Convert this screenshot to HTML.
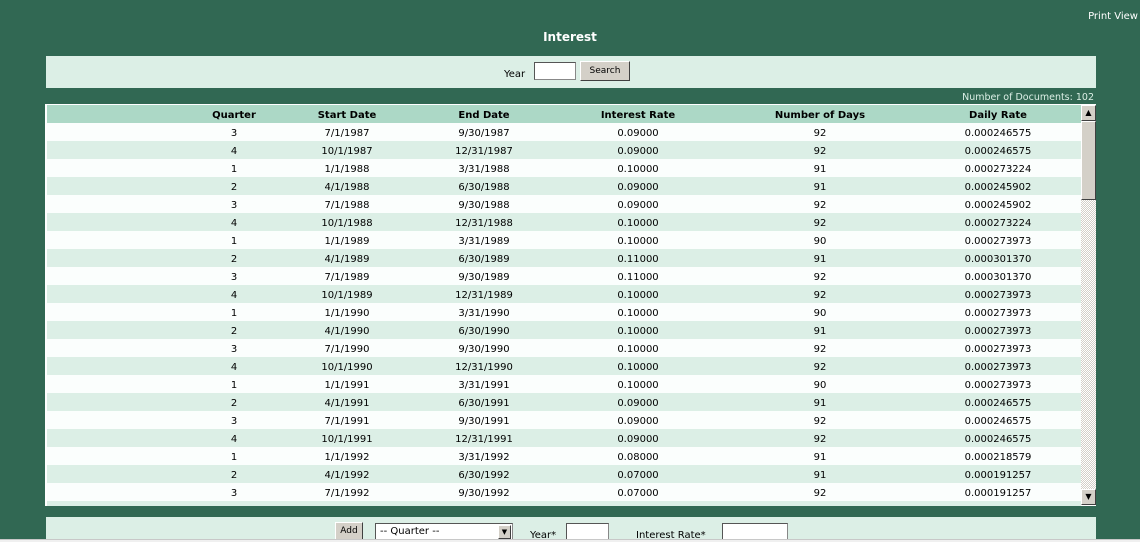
<!DOCTYPE html>
<html><head><style>
body{margin:0;width:1140px;height:542px;background:#316853;position:relative;overflow:hidden;font-family:"DejaVu Sans","Liberation Sans",sans-serif;font-size:10px;color:#000}
.a{position:absolute}
.pv{right:2px;top:11px;color:#fff}
.t{left:0;width:1140px;top:30px;text-align:center;color:#fff;font-weight:bold;font-size:12px}
.sp{left:46px;top:56px;width:1050px;height:32px;background:#dcefe6}
.inp{background:#fff;border:1px solid #888;border-top-color:#555;border-left-color:#555;box-sizing:border-box}
.btn{background:#d4d0c8;border:1px solid;border-color:#fff #404040 #404040 #fff;box-sizing:border-box;text-align:center;font-size:9px}
.nd{right:46px;top:92px;color:#dcefe6;font-size:9.5px}
.tb{left:45px;top:104px;width:1051px;height:402px;background:#fff;overflow:hidden}
.row{position:absolute;left:2px;width:1034px;height:18px;line-height:18px}
.row span{position:absolute;top:2px;width:200px;margin-left:-100px;text-align:center}
.h{background:#acd8c6;font-weight:bold}
.w{background:#fbfefd}.g{background:#dcefe6}
.sb{left:1081px;top:105px;width:15px;height:400px;background:repeating-conic-gradient(#d4d0c8 0 25%,#fff 0 50%) 0 0/2px 2px}
.bp{left:46px;top:517px;width:1050px;height:23px;background:#dcefe6}
</style></head><body>
<div class="a pv">Print View</div>
<div class="a t">Interest</div>
<div class="a sp"></div>
<div class="a" style="left:504px;top:69px">Year</div>
<div class="a inp" style="left:534px;top:62px;width:42px;height:18px"></div>
<div class="a btn" style="left:580px;top:61px;width:50px;height:20px;line-height:18px">Search</div>
<div class="a nd">Number of Documents: 102</div>
<div class="a tb" id="tb"></div>
<div class="a sb">
 <div class="btn a" style="left:0;top:0;width:15px;height:16px;font-size:8px;line-height:14px">▲</div>
 <div class="btn a" style="left:0;top:16px;width:15px;height:79px"></div>
 <div class="btn a" style="left:0;top:384px;width:15px;height:16px;font-size:8px;line-height:14px">▼</div>
</div>
<div class="a bp"></div>
<div class="a btn" style="left:335px;top:522px;width:28px;height:18px;line-height:16px">Add</div>
<div class="a inp" style="left:375px;top:523px;width:138px;height:17px;padding-left:4px;line-height:16px">-- Quarter --<div class="btn a" style="right:1px;top:1px;width:13px;height:14px;font-size:7px;line-height:12px">▼</div></div>
<div class="a" style="left:530px;top:530px">Year*</div>
<div class="a inp" style="left:566px;top:523px;width:43px;height:19px"></div>
<div class="a" style="left:636px;top:530px">Interest Rate*</div>
<div class="a inp" style="left:722px;top:523px;width:66px;height:19px"></div>
<div class="a" style="left:0;top:539px;width:1140px;height:1px;background:#c8c8c8"></div>
<div class="a" style="left:0;top:540px;width:1140px;height:2px;background:#f0f0f0"></div>
<script>
var d=[[3,"7/1/1987","9/30/1987","0.09000",92,"0.000246575"],[4,"10/1/1987","12/31/1987","0.09000",92,"0.000246575"],[1,"1/1/1988","3/31/1988","0.10000",91,"0.000273224"],[2,"4/1/1988","6/30/1988","0.09000",91,"0.000245902"],[3,"7/1/1988","9/30/1988","0.09000",92,"0.000245902"],[4,"10/1/1988","12/31/1988","0.10000",92,"0.000273224"],[1,"1/1/1989","3/31/1989","0.10000",90,"0.000273973"],[2,"4/1/1989","6/30/1989","0.11000",91,"0.000301370"],[3,"7/1/1989","9/30/1989","0.11000",92,"0.000301370"],[4,"10/1/1989","12/31/1989","0.10000",92,"0.000273973"],[1,"1/1/1990","3/31/1990","0.10000",90,"0.000273973"],[2,"4/1/1990","6/30/1990","0.10000",91,"0.000273973"],[3,"7/1/1990","9/30/1990","0.10000",92,"0.000273973"],[4,"10/1/1990","12/31/1990","0.10000",92,"0.000273973"],[1,"1/1/1991","3/31/1991","0.10000",90,"0.000273973"],[2,"4/1/1991","6/30/1991","0.09000",91,"0.000246575"],[3,"7/1/1991","9/30/1991","0.09000",92,"0.000246575"],[4,"10/1/1991","12/31/1991","0.09000",92,"0.000246575"],[1,"1/1/1992","3/31/1992","0.08000",91,"0.000218579"],[2,"4/1/1992","6/30/1992","0.07000",91,"0.000191257"],[3,"7/1/1992","9/30/1992","0.07000",92,"0.000191257"]];
var x=[187,300,437,591,773,951],h='<div class="row h" style="top:1px">';
["Quarter","Start Date","End Date","Interest Rate","Number of Days","Daily Rate"].forEach(function(t,i){h+='<span style="left:'+x[i]+'px">'+t+'</span>'});
h+='</div>';
d.forEach(function(r,j){h+='<div class="row '+(j%2?'g':'w')+'" style="top:'+(19+j*18)+'px">';r.forEach(function(t,i){h+='<span style="left:'+x[i]+'px">'+t+'</span>'});h+='</div>'});
h+='<div class="row g" style="top:397px"></div>';
document.getElementById('tb').innerHTML=h;
</script>
</body></html>
